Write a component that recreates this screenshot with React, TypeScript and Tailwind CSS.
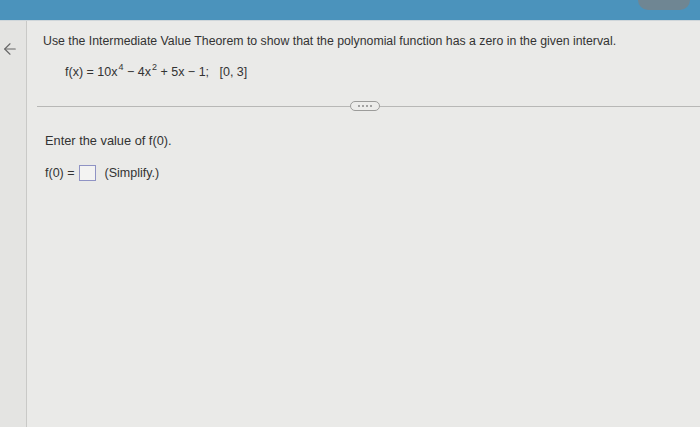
import { ArrowLeft } from "lucide-react";

export default function App() {
  return (
    <div
      className="w-[700px] h-[427px] overflow-hidden bg-[#e7e7e5] flex flex-col text-[#333333]"
      style={{ fontFamily: '"Liberation Sans", Arial, sans-serif' }}
    >
      {/* top bar */}
      <div className="h-[20px] bg-[#4b93bc] flex justify-end shrink-0">
        <div className="w-[52px] h-[10px] mr-[10px] rounded-b-full bg-[#6f8693]" />
      </div>
      <div className="h-[1px] bg-[#cfd6da] shrink-0" />

      <div className="flex flex-1 min-h-0">
        {/* left gutter */}
        <div className="w-[27px] shrink-0 border-r border-[#c9c9c7] bg-[#e4e4e2] pt-[19px] pl-[1px]">
          <ArrowLeft size={18} strokeWidth={1.5} className="text-[#666666]" />
        </div>

        {/* content */}
        <div className="flex-1 flex flex-col bg-[#eaeae8]">
          <div className="pl-[16px] pt-[13px] text-[12.3px] leading-[14px] whitespace-nowrap">
            Use the Intermediate Value Theorem to show that the polynomial function has a zero in the given interval.
          </div>
          <div className="pl-[38px] pt-[17px] text-[12.5px] leading-[14px] whitespace-nowrap">
            f(x) = 10x<span className="text-[9px] relative -top-[6px] ml-[1px]">4</span> − 4x
            <span className="text-[9px] relative -top-[6px] ml-[1px]">2</span> + 5x − 1;&nbsp;&nbsp;&nbsp;[0, 3]
          </div>

          {/* divider with pill */}
          <div className="flex items-center mt-[21px] pl-[10px]">
            <div className="w-[313px] h-[1px] bg-[#b8b8b6]" />
            <div className="w-[30px] h-[10px] rounded-full border border-[#9c9c9a] bg-[#ececea] flex items-center justify-center gap-[2px]">
              <span className="w-[2px] h-[2px] rounded-full bg-[#8a8a88]" />
              <span className="w-[2px] h-[2px] rounded-full bg-[#8a8a88]" />
              <span className="w-[2px] h-[2px] rounded-full bg-[#8a8a88]" />
              <span className="w-[2px] h-[2px] rounded-full bg-[#8a8a88]" />
            </div>
            <div className="flex-1 h-[1px] bg-[#b8b8b6]" />
          </div>

          <div className="pl-[18px] pt-[23px] text-[12.8px] leading-[14px]">Enter the value of f(0).</div>
          <div className="pl-[18px] pt-[17px] flex items-center text-[12.5px] leading-[14px]">
            <span>f(0) =</span>
            <span className="ml-[4px] w-[17px] h-[16px] border border-[#8f93c4] bg-[#f3f3f2]" />
            <span className="ml-[9px]">(Simplify.)</span>
          </div>
        </div>
      </div>
    </div>
  );
}
